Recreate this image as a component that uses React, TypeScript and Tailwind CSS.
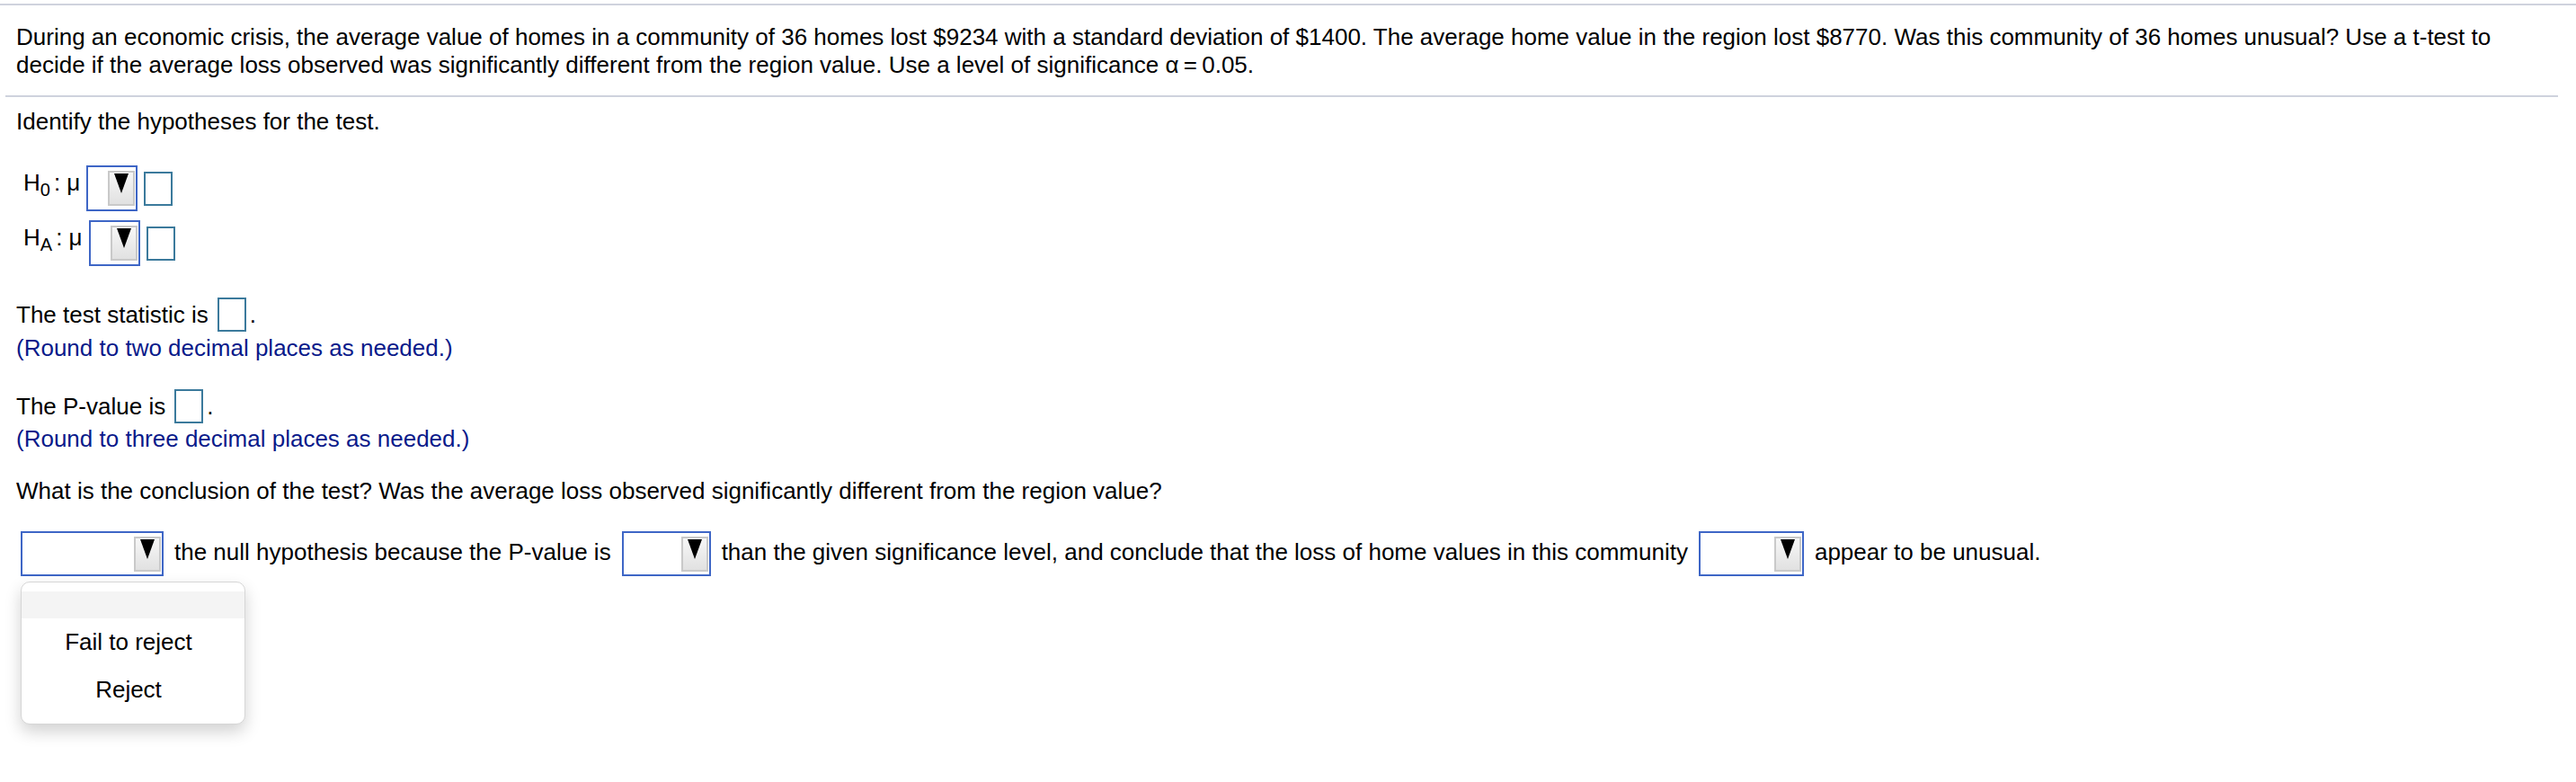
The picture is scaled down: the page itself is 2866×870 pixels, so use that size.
import React from "react";

function Caret() {
  return (
    <span className="flex h-[39px] w-[30px] shrink-0 justify-center border-2 border-[#c9c9c9] bg-linear-to-b from-[#f7f7f7] to-[#e1e1e1] pt-[1px]">
      <svg width="16" height="22" viewBox="0 0 16 22" aria-hidden="true">
        <polygon points="0,0 16,0 8,22" fill="#000" />
      </svg>
    </span>
  );
}

function Select({ size, className = "" }: { size: string; className?: string }) {
  return (
    <span
      className={`flex shrink-0 items-center justify-end border-2 border-[#3e66c6] bg-white pr-[1px] ${size} ${className}`}
    >
      <Caret />
    </span>
  );
}

function AnswerBox({ className = "" }: { className?: string }) {
  return <span className={`block h-[38px] w-[32px] shrink-0 border-2 border-[#3b7a9c] bg-white ${className}`} />;
}

function HypothesisRow({ sub }: { sub: string }) {
  return (
    <div className="flex h-[51px] items-start">
      <span className="mt-[4px] whitespace-nowrap">
        H<span className="align-sub text-[20px] leading-none">{sub}</span>
        <span className="ml-[4px]">:</span> μ
      </span>
      <Select size="h-[51px] w-[57px]" className="ml-[7px]" />
      <AnswerBox className="ml-[7px] mt-[7px]" />
    </div>
  );
}

export default function App() {
  return (
    <div className="min-h-[870px] bg-white pt-[4px] font-['Liberation_Sans',Arial,Helvetica,sans-serif] text-[26px] leading-[31px] text-black">
      <div className="h-[2px] bg-[#cfd2dd]" />
      <div className="ml-[6px] mr-[20px]">
        <p className="mt-[20px] pl-[12px]">
          During an economic crisis, the average value of homes in a community of 36 homes lost $9234 with a standard
          deviation of $1400. The average home value in the region lost $8770. Was this community of 36 homes unusual? Use
          a t-test to
          <br />
          decide if the average loss observed was significantly different from the region value. Use a level of
          significance α{"\u2009"}={"\u2009"}0.05.
        </p>
        <div className="mt-[18px] h-[2px] bg-[#cfd2dd]" />

        <p className="mt-[12px] pl-[12px]">Identify the hypotheses for the test.</p>

        <div className="mt-[33px] flex flex-col gap-[10px] pl-[20px]">
          <HypothesisRow sub="0" />
          <HypothesisRow sub="A" />
        </div>

        <div className="mt-[35px] flex h-[38px] items-center pl-[12px]">
          <span className="whitespace-nowrap">The test statistic is</span>
          <AnswerBox className="ml-[10px]" />
          <span className="ml-[4px]">.</span>
        </div>
        <p className="mt-[3px] pl-[12px] text-[#0a1a8a]">(Round to two decimal places as needed.)</p>

        <div className="mt-[30px] flex h-[38px] items-center pl-[12px]">
          <span className="whitespace-nowrap">The P-value is</span>
          <AnswerBox className="ml-[10px]" />
          <span className="ml-[4px]">.</span>
        </div>
        <p className="mt-[2px] pl-[12px] text-[#0a1a8a]">(Round to three decimal places as needed.)</p>

        <p className="mt-[27px] pl-[12px]">
          What is the conclusion of the test? Was the average loss observed significantly different from the region value?
        </p>

        <div className="relative mt-[29px] flex items-start gap-[12px] pl-[17px]">
          <Select size="h-[50px] w-[159px]" />
          <span className="mt-[8px] whitespace-nowrap">the null hypothesis because the P-value is</span>
          <Select size="h-[50px] w-[99px]" />
          <span className="mt-[8px] whitespace-nowrap">
            than the given significance level, and conclude that the loss of home values in this community
          </span>
          <Select size="h-[50px] w-[117px]" />
          <span className="mt-[8px] whitespace-nowrap">appear to be unusual.</span>

          <div className="absolute left-[17px] top-[56px] w-[250px] rounded-[10px] border border-[#d6d6d6] bg-white pb-[11px] pt-[10px] shadow-[0_8px_18px_rgba(0,0,0,0.18)]">
            <div className="h-[30px] bg-[#f4f4f4]" />
            <div className="flex h-[53px] items-center justify-center pr-[10px]">Fail to reject</div>
            <div className="flex h-[53px] items-center justify-center pr-[10px]">Reject</div>
          </div>
        </div>
      </div>
    </div>
  );
}
